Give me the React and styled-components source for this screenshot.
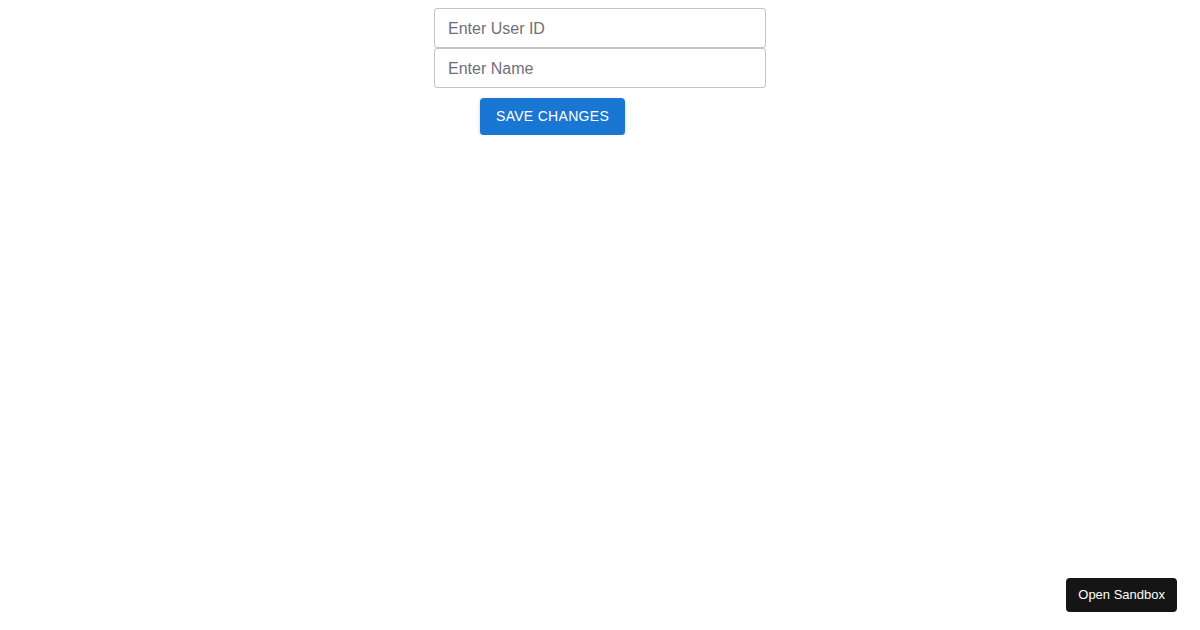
import React from 'react';
import styled, { createGlobalStyle } from 'styled-components';

const GlobalStyle = createGlobalStyle`
  body {
    margin: 8px;
    background: #fff;
    font-family: 'Liberation Sans', Arial, sans-serif;
  }
`;

const Form = styled.form`
  width: 332px;
  margin: 0 auto;
  display: flex;
  flex-direction: column;
`;

const Field = styled.input`
  box-sizing: border-box;
  width: 100%;
  height: 40px;
  padding: 9.5px 13px 7.5px;
  border: 1px solid rgba(0, 0, 0, 0.23);
  border-radius: 4px;
  font-family: 'Liberation Sans', Arial, sans-serif;
  font-size: 16px;
  color: rgba(0, 0, 0, 0.87);
  outline: none;

  &::placeholder {
    color: #6f6f7a;
    opacity: 1;
  }
`;

const Button = styled.button`
  align-self: flex-start;
  margin: 10px 0 0 46px;
  padding: 6px 16px;
  border: 0;
  border-radius: 4px;
  background: #1976d2;
  color: #fff;
  font-family: 'Liberation Sans', Arial, sans-serif;
  font-size: 14px;
  line-height: 1.75;
  letter-spacing: 0.3px;
  text-transform: uppercase;
  box-shadow: 0 3px 1px -2px rgba(0, 0, 0, 0.2), 0 2px 2px 0 rgba(0, 0, 0, 0.14),
    0 1px 5px 0 rgba(0, 0, 0, 0.12);
  cursor: pointer;
`;

const SandboxLink = styled.a`
  position: fixed;
  right: 23px;
  bottom: 18px;
  height: 34px;
  box-sizing: border-box;
  display: flex;
  align-items: center;
  padding: 0 12px 2px;
  border-radius: 4px;
  background: #151515;
  color: #fff;
  font-family: 'Liberation Sans', Arial, sans-serif;
  font-size: 13px;
  text-decoration: none;
`;

const App = () => {
  return (
    <>
      <GlobalStyle />
      <Form onSubmit={(e) => e.preventDefault()}>
        <Field placeholder="Enter User ID" />
        <Field placeholder="Enter Name" />
        <Button type="submit">Save Changes</Button>
      </Form>
      <SandboxLink href="#">Open Sandbox</SandboxLink>
    </>
  );
};

export default App;
